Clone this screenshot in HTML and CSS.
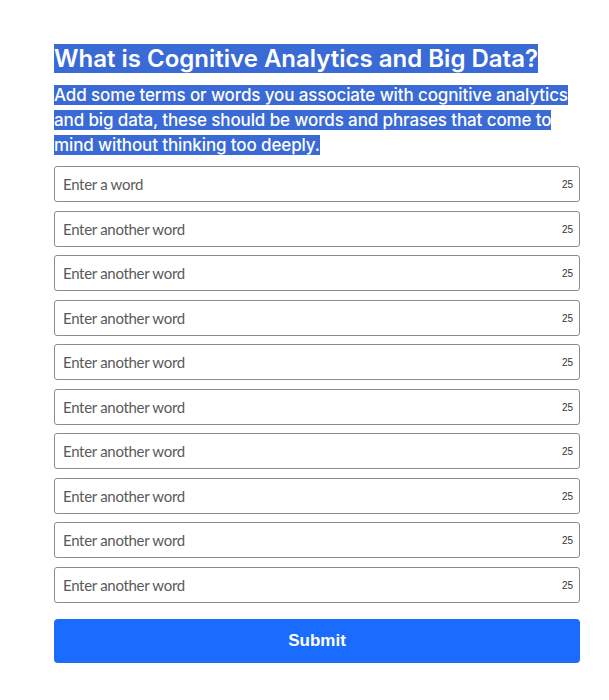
FILE: index.html
```html
<!DOCTYPE html>
<html lang="en">
<head>
<meta charset="utf-8">
<title>What is Cognitive Analytics and Big Data?</title>
<link rel="stylesheet" href="styles.css">
</head>
<body>
<main class="page">
  <h1 class="title"><span class="sel">What is Cognitive Analytics and Big Data?</span></h1>
  <p class="desc"><span class="sel">Add some terms or words you associate with cognitive analytics and big data, these should be words and phrases that come to mind without thinking too deeply.</span></p>
  <form class="form">
    <label class="field"><input class="input" type="text" placeholder="Enter a word"><span class="count">25</span></label>
    <label class="field"><input class="input" type="text" placeholder="Enter another word"><span class="count">25</span></label>
    <label class="field"><input class="input" type="text" placeholder="Enter another word"><span class="count">25</span></label>
    <label class="field"><input class="input" type="text" placeholder="Enter another word"><span class="count">25</span></label>
    <label class="field"><input class="input" type="text" placeholder="Enter another word"><span class="count">25</span></label>
    <label class="field"><input class="input" type="text" placeholder="Enter another word"><span class="count">25</span></label>
    <label class="field"><input class="input" type="text" placeholder="Enter another word"><span class="count">25</span></label>
    <label class="field"><input class="input" type="text" placeholder="Enter another word"><span class="count">25</span></label>
    <label class="field"><input class="input" type="text" placeholder="Enter another word"><span class="count">25</span></label>
    <label class="field"><input class="input" type="text" placeholder="Enter another word"><span class="count">25</span></label>
    <button class="submit" type="button">Submit</button>
  </form>
</main>
</body>
</html>
```

FILE: styles.css
```css
html, body {
  margin: 0;
  padding: 0;
  background: #ffffff;
}

.page {
  width: 526px;
  margin-left: 54px;
  padding-top: 43px;
  font-family: "Inter", "Noto Sans", "Liberation Sans", sans-serif;
}

.sel {
  background: #3a6ad6;
  color: #ffffff;
  -webkit-box-decoration-break: clone;
  box-decoration-break: clone;
}

.title {
  margin: 0;
  font-size: 24px;
  font-weight: 600;
  line-height: 32px;
  letter-spacing: 0;
}

.desc {
  margin: 8px 0 0;
  font-size: 17px;
  line-height: 25px;
  font-weight: 500;
  letter-spacing: -0.12px;
}

.form {
  margin-top: 8px;
  display: flex;
  flex-direction: column;
  gap: 8.5px;
}

.field {
  position: relative;
  display: block;
  height: 36px;
}

.input {
  box-sizing: border-box;
  width: 100%;
  height: 36px;
  margin: 0;
  padding: 0 30px 0 8px;
  border: 1.5px solid #8c8c8c;
  border-radius: 3px;
  background: #ffffff;
  font-family: "Lato", "Noto Sans", "Liberation Sans", sans-serif;
  font-size: 15px;
  color: #333333;
  letter-spacing: -0.3px;
  outline: none;
}

.input::placeholder {
  color: #5a5a5a;
  opacity: 1;
}

.count {
  position: absolute;
  right: 7px;
  top: 50%;
  transform: translateY(-50%);
  font-family: "Liberation Sans", sans-serif;
  font-size: 10px;
  color: #333333;
}

.submit {
  margin-top: 8px;
  height: 44px;
  width: 100%;
  border: none;
  border-radius: 4px;
  background: #1a6cff;
  color: #ffffff;
  font-family: "Liberation Sans", "Noto Sans", sans-serif;
  font-size: 17px;
  font-weight: 700;
  cursor: pointer;
}
```
